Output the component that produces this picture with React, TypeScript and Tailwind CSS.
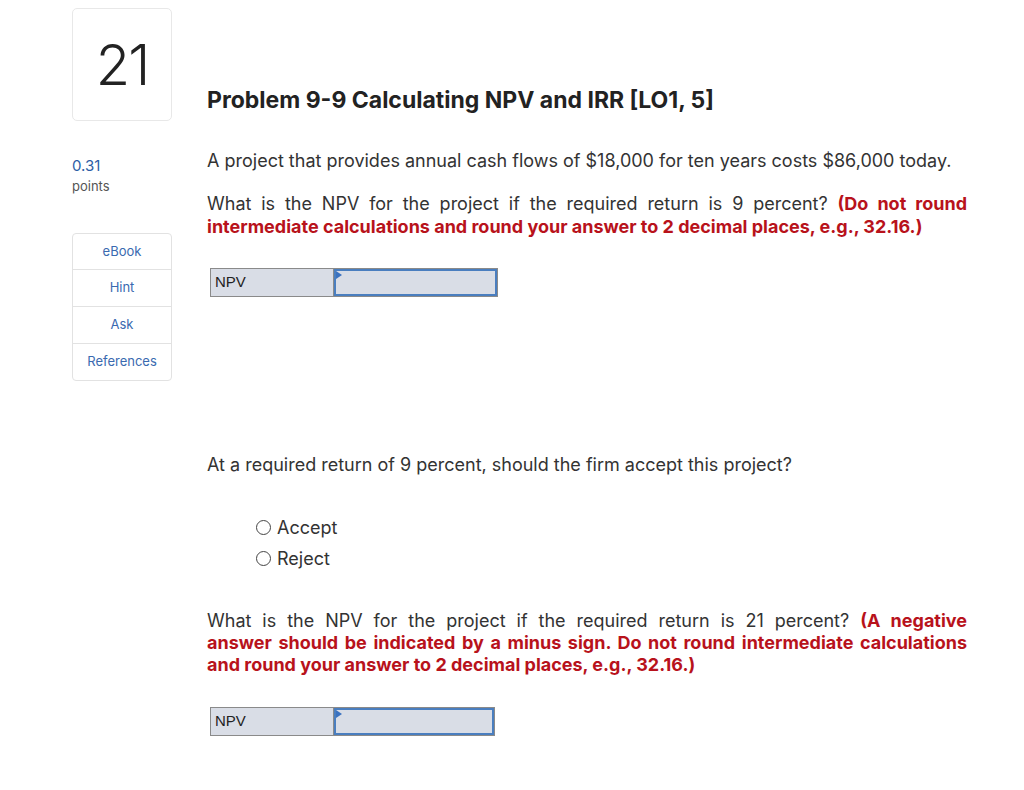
import React from "react";

function NpvTable({ w }: { w: string }) {
  return (
    <div className={`flex h-[29px] ${w} border border-[#8a8a8a] bg-[#d9dde6] font-['Liberation_Sans',sans-serif] text-[15px] text-[#222]`}>
      <div className="flex w-[123px] items-center border-r border-[#8a8a8a] pl-[4px]">NPV</div>
      <div className="relative flex-1 border-2 border-[#4a7ebf]">
        <div className="absolute left-0 top-0 h-0 w-0 border-y-[4px] border-l-[6px] border-y-transparent border-l-[#3a72c0]" />
      </div>
    </div>
  );
}

function Radio({ label }: { label: string }) {
  return (
    <div className="flex items-center gap-[6px]">
      <span className="inline-block h-[15px] w-[15px] rounded-full border border-[#444] bg-white" />
      <span>{label}</span>
    </div>
  );
}

export default function App() {
  return (
    <div className="flex min-h-[790px] bg-white font-['Inter',sans-serif] text-[#333]">
      <div className="ml-[72px] mt-[8px] flex w-[100px] flex-col">
        <div className="flex h-[113px] items-center justify-center rounded-[5px] border border-[#e8e8e8] text-[56px] font-light tracking-[-2px] text-[#222]">
          21
        </div>
        <div className="mt-[35px] text-[15px] leading-[20px] text-[#2d5ea6]">0.31</div>
        <div className="text-[13px] leading-[20px] text-[#555]">points</div>
        <div className="mt-[37px] flex flex-col rounded-[4px] border border-[#e2e2e2] text-[13px] text-[#3a6ab0]">
          <div className="flex h-[36px] items-center justify-center border-b border-[#e2e2e2]">eBook</div>
          <div className="flex h-[37px] items-center justify-center border-b border-[#e2e2e2]">Hint</div>
          <div className="flex h-[37px] items-center justify-center border-b border-[#e2e2e2]">Ask</div>
          <div className="flex h-[36px] items-center justify-center">References</div>
        </div>
      </div>
      <div className="ml-[35px] mr-[57px] flex-1 text-[18px]">
        <h1 className="mt-[85px] text-[23px] font-bold leading-[30px] text-[#222]">Problem 9-9 Calculating NPV and IRR [LO1, 5]</h1>
        <p className="mt-[34px] leading-[23px]">A project that provides annual cash flows of $18,000 for ten years costs $86,000 today.</p>
        <div className="mt-[20px] leading-[23px]">
          <span className="block text-justify [text-align-last:justify]">
            What is the NPV for the project if the required return is 9 percent? <b className="text-[#b8121b]">(Do not round</b>
          </span>
          <b className="block text-[#b8121b]">intermediate calculations and round your answer to 2 decimal places, e.g., 32.16.)</b>
        </div>
        <div className="ml-[3px] mt-[30px]">
          <NpvTable w="w-[288px]" />
        </div>
        <p className="mt-[156px] leading-[23px]">At a required return of 9 percent, should the firm accept this project?</p>
        <div className="ml-[49px] mt-[38px] flex flex-col gap-[4px] leading-[27px]">
          <Radio label="Accept" />
          <Radio label="Reject" />
        </div>
        <div className="mt-[38px] leading-[22px]">
          <span className="block text-justify [text-align-last:justify]">
            What is the NPV for the project if the required return is 21 percent? <b className="text-[#b8121b]">(A negative</b>
          </span>
          <b className="block text-justify text-[#b8121b] [text-align-last:justify]">
            answer should be indicated by a minus sign. Do not round intermediate calculations
          </b>
          <b className="block text-[#b8121b]">and round your answer to 2 decimal places, e.g., 32.16.)</b>
        </div>
        <div className="ml-[3px] mt-[31px]">
          <NpvTable w="w-[285px]" />
        </div>
      </div>
    </div>
  );
}
